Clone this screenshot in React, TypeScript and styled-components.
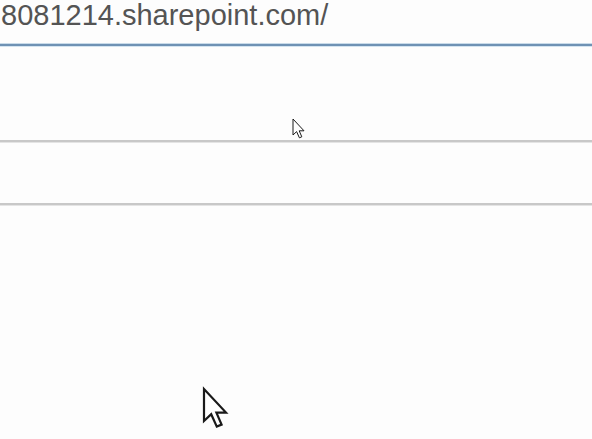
import React from "react";
import styled, { createGlobalStyle } from "styled-components";

const Global = createGlobalStyle`
  html, body { margin: 0; padding: 0; background: #fdfdfd; }
  body { overflow: hidden; }
`;

const Page = styled.div`
  position: relative;
  width: 592px;
  height: 439px;
  background: #fdfdfd;
  display: flex;
  flex-direction: column;
  overflow: hidden;
`;

const AddressBar = styled.div`
  height: 44px;
  box-sizing: content-box;
  padding-left: 1px;
  border-bottom: 2px solid #6f92b4;
  box-shadow: 0 1px 0 #d4e4f0, 0 -1px 0 #c9dbe9 inset;
  font-family: "Liberation Sans", Arial, sans-serif;
  font-size: 29px;
  line-height: 31px;
  color: #545454;
  white-space: nowrap;
`;

const Band = styled.div<{ $h: number }>`
  height: ${(p) => p.$h}px;
  box-sizing: content-box;
  border-bottom: 2px solid #c8c8c8;
  box-shadow: 0 1px 0 #e4e4e4;
`;

const Rest = styled.div`
  flex: 1;
`;

const Cursor = styled.svg<{ $x: number; $y: number; $w: number; $h: number }>`
  position: absolute;
  left: ${(p) => p.$x}px;
  top: ${(p) => p.$y}px;
  width: ${(p) => p.$w}px;
  height: ${(p) => p.$h}px;
  overflow: visible;
`;

const Arrow = ({ x, y, w, h, sw }: { x: number; y: number; w: number; h: number; sw: number }) => (
  <Cursor $x={x} $y={y} $w={w} $h={h} viewBox="0 0 13 21">
    <path
      d="M1 1 V17 L4.6 13.6 L7.4 19.8 L9.8 18.8 L7.2 12.8 L12 12.8 Z"
      fill="#ffffff"
      stroke="#1a1a1a"
      strokeWidth={sw}
      strokeLinejoin="miter"
    />
  </Cursor>
);

export default function App() {
  return (
    <>
      <Global />
      <Page>
        <AddressBar>8081214.sharepoint.com/</AddressBar>
        <Band $h={94} />
        <Band $h={61} />
        <Rest />
        <Arrow x={292} y={118} w={13} h={21} sw={1} />
        <Arrow x={202} y={384} w={26} h={48} sw={1.1} />
      </Page>
    </>
  );
}
